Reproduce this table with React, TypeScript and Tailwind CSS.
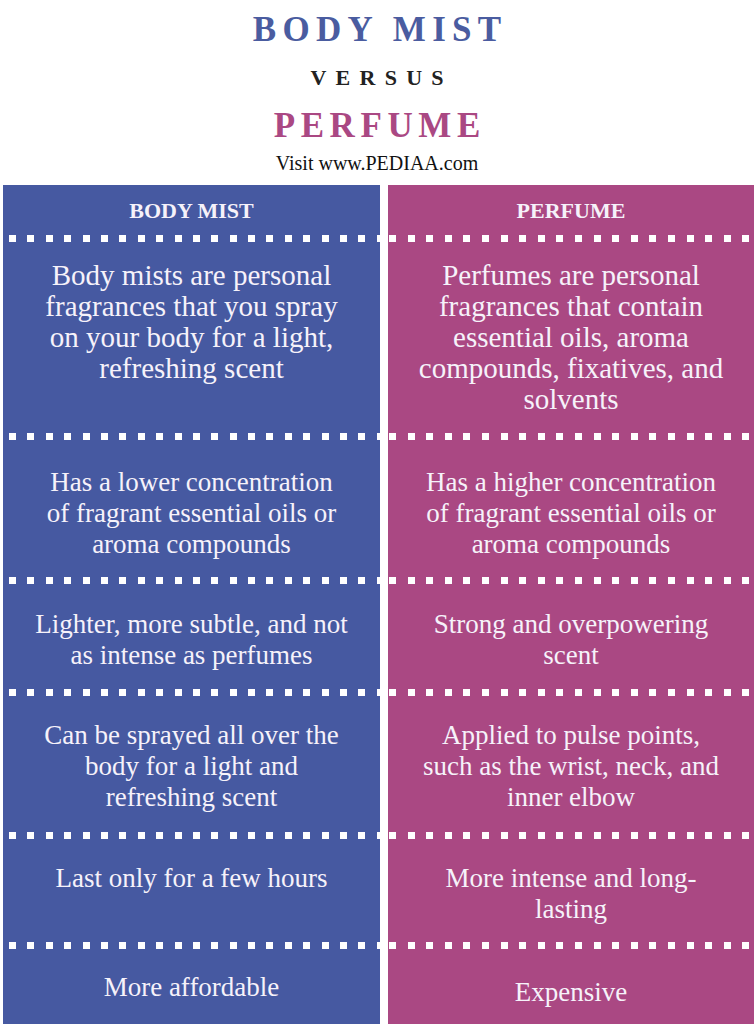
import React from 'react'

type Row = {
    left: string[];
    right: string[];
    height: string;
    pad: string;
    padRight?: string;
    size?: string;
}

const rows: Row[] = [
    {
        left: ['Body mists are personal', 'fragrances that you spray', 'on your body for a light,', 'refreshing scent'],
        right: ['Perfumes are personal', 'fragrances that contain', 'essential oils, aroma', 'compounds, fixatives, and', 'solvents'],
        height: 'h-[191px]',
        pad: 'pt-[18px]',
        size: 'text-[29px]',
    },
    {
        left: ['Has a lower concentration', 'of fragrant essential oils or', 'aroma compounds'],
        right: ['Has a higher concentration', 'of fragrant essential oils or', 'aroma compounds'],
        height: 'h-[137px]',
        pad: 'pt-[27px]',
    },
    {
        left: ['Lighter, more subtle, and not', 'as intense as perfumes'],
        right: ['Strong and overpowering', 'scent'],
        height: 'h-[105px]',
        pad: 'pt-[25px]',
    },
    {
        left: ['Can be sprayed all over the', 'body for a light and', 'refreshing scent'],
        right: ['Applied to pulse points,', 'such as the wrist, neck, and', 'inner elbow'],
        height: 'h-[136px]',
        pad: 'pt-[24px]',
    },
    {
        left: ['Last only for a few hours'],
        right: ['More intense and long-', 'lasting'],
        height: 'h-[103px]',
        pad: 'pt-[24px]',
    },
    {
        left: ['More affordable'],
        right: ['Expensive'],
        height: 'h-[75px]',
        pad: 'pt-[23px]',
        padRight: 'pt-[28px]',
    },
]

// white square "perforation" strip across both columns
function Dots() {
    return (
        <div className="flex gap-[8px]">
            <div className="w-[377px] h-[7px] bg-[#4659a1] overflow-hidden">
                <div className="flex gap-[11.4px] pl-[6px] w-[420px]">
                    {Array.from({ length: 21 }).map((_, i) => (
                        <div key={i} className="w-[7px] h-[7px] bg-white shrink-0" />
                    ))}
                </div>
            </div>
            <div className="flex-1 h-[7px] bg-[#aa4883] overflow-hidden">
                <div className="flex gap-[11.6px] pl-[1px] w-[420px]">
                    {Array.from({ length: 20 }).map((_, i) => (
                        <div key={i} className="w-[7px] h-[7px] bg-white shrink-0" />
                    ))}
                </div>
            </div>
        </div>
    )
}

function Cell({ lines, className }: { lines: string[]; className: string }) {
    return (
        <div className={`text-center leading-[31px] text-[#f6f2fa] ${className}`}>
            {lines.map((line, i) => (
                <div key={i} className="whitespace-nowrap">{line}</div>
            ))}
        </div>
    )
}

export default function App() {
    return (
        <div className="w-[754px] h-[1024px] overflow-hidden bg-white font-[family-name:Liberation_Serif,Times_New_Roman,serif]">
            {/* Title */}
            <div className="h-[185px] flex flex-col items-center">
                <div className="mt-[9px] text-[35px] leading-[42px] font-bold tracking-[0.18em] pl-[0.18em] text-[#4a5ca0]">
                    BODY MIST
                </div>
                <div className="mt-[14px] text-[22px] leading-[26px] font-bold tracking-[0.42em] pl-[0.42em] text-[#222222]">
                    VERSUS
                </div>
                <div className="mt-[14px] text-[35px] leading-[42px] font-bold tracking-[0.16em] pl-[0.16em] text-[#aa4883]">
                    PERFUME
                </div>
                <div className="mt-[4px] text-[20px] leading-[24px] text-[#111111]">
                    Visit www.PEDIAA.com
                </div>
            </div>

            {/* Table */}
            <div className="pl-[3px]">
                <div className="flex gap-[8px] h-[50px]">
                    <div className="w-[377px] bg-[#4659a1] flex justify-center pt-[13px]">
                        <span className="text-[22px] leading-[26px] font-bold text-[#f6f2fa]">BODY MIST</span>
                    </div>
                    <div className="flex-1 bg-[#aa4883] flex justify-center pt-[13px]">
                        <span className="text-[22px] leading-[26px] font-bold text-[#f6f2fa]">PERFUME</span>
                    </div>
                </div>
                {rows.map((row, i) => (
                    <div key={i}>
                        <Dots />
                        <div className={`flex gap-[8px] ${row.height}`}>
                            <Cell
                                lines={row.left}
                                className={`w-[377px] bg-[#4659a1] ${row.size ?? 'text-[27px]'} ${row.pad}`}
                            />
                            <Cell
                                lines={row.right}
                                className={`flex-1 bg-[#aa4883] ${row.size ?? 'text-[27px]'} ${row.padRight ?? row.pad}`}
                            />
                        </div>
                    </div>
                ))}
            </div>
        </div>
    )
}
